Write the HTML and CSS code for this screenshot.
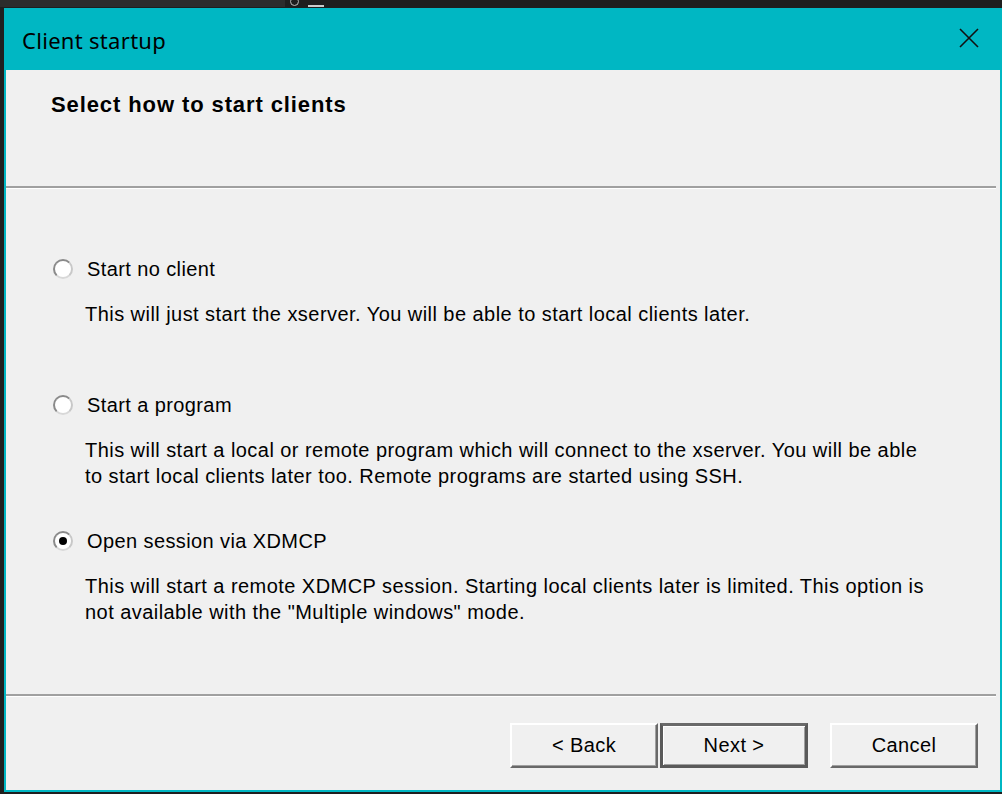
FILE: index.html
```html
<!DOCTYPE html>
<html>
<head>
<meta charset="utf-8">
<link rel="stylesheet" href="styles.css">
</head>
<body>
<div class="topbar"><span class="top-strip"></span><span class="top-ring"></span><span class="top-line"></span></div>
<div class="window">
  <div class="titlebar">
    <span class="title">Client startup</span>
    <svg class="close" width="22" height="22" viewBox="0 0 22 22"><path d="M2 2 L20 20 M20 2 L2 20" stroke="#111" stroke-width="1.6" fill="none"/></svg>
  </div>
  <div class="header">
    <h1 class="heading">Select how to start clients</h1>
  </div>
  <div class="separator"></div>
  <div class="content">
    <div class="option">
      <div class="option-row"><span class="radio"></span><span class="label">Start no client</span></div>
      <p class="desc">This will just start the xserver. You will be able to start local clients later.</p>
    </div>
    <div class="option">
      <div class="option-row"><span class="radio"></span><span class="label">Start a program</span></div>
      <p class="desc">This will start a local or remote program which will connect to the xserver. You will be able<br>to start local clients later too. Remote programs are started using SSH.</p>
    </div>
    <div class="option">
      <div class="option-row"><span class="radio checked"></span><span class="label">Open session via XDMCP</span></div>
      <p class="desc">This will start a remote XDMCP session. Starting local clients later is limited. This option is<br>not available with the "Multiple windows" mode.</p>
    </div>
  </div>
  <div class="separator"></div>
  <div class="footer">
    <button class="btn">&lt; Back</button>
    <button class="btn default">Next &gt;</button>
    <button class="btn cancel">Cancel</button>
  </div>
</div>
</body>
</html>
```
FILE: styles.css
```css
* { box-sizing: border-box; }
html, body { margin: 0; padding: 0; }
body {
  background: #1f1f1f;
  width: 1002px;
  height: 794px;
  overflow: hidden;
  font-family: "Liberation Sans", Arial, sans-serif;
}
.topbar {
  height: 8px;
  position: relative;
  background: #1e1e1e;
}
.top-strip {
  display: block;
  width: 285px;
  height: 7px;
  background: #2c2c2c;
}
.top-ring {
  position: absolute;
  left: 290px;
  top: -3px;
  width: 9px;
  height: 9px;
  border: 1px solid #bbb;
  border-radius: 50%;
}
.top-line {
  position: absolute;
  left: 308px;
  top: 5px;
  width: 16px;
  height: 2px;
  background: #ccc;
}
.window {
  margin-left: 4px;
  width: 998px;
  height: 784px;
  border: 2px solid #00b7c3;
  border-top: none;
  background: #f0f0f0;
  display: flex;
  flex-direction: column;
}
.titlebar {
  height: 62px;
  background: #00b7c3;
  display: flex;
  align-items: center;
  justify-content: space-between;
  padding: 0 22px 0 18px;
  margin: 0 -2px;
}
.title {
  font-family: "Noto Sans", "Open Sans", sans-serif;
  font-size: 22px;
  letter-spacing: 0.3px;
  color: #000;
  padding-top: 2px;
}
.close { margin-top: -2px; }
.header {
  height: 116px;
  padding: 22px 0 0 45px;
}
.heading {
  margin: 0;
  font-size: 22px;
  font-weight: bold;
  letter-spacing: 0.9px;
  color: #000;
}
.separator {
  height: 3px;
  border-top: 2px solid #a0a0a0;
  border-bottom: 1px solid #ffffff;
  margin-right: 4px;
}
.content {
  height: 505px;
  padding: 68px 0 0 47px;
}
.option { height: 136px; }
.option-row {
  display: flex;
  align-items: center;
  height: 24px;
}
.radio {
  width: 20px;
  height: 20px;
  border-radius: 50%;
  background: #fff;
  border: 2px solid #8a8a8a;
  border-bottom-color: #d8d8d8;
  border-right-color: #c8c8c8;
  position: relative;
  margin-right: 14px;
  flex: none;
}
.radio.checked::after {
  content: "";
  position: absolute;
  left: 4px;
  top: 4px;
  width: 8px;
  height: 8px;
  border-radius: 50%;
  background: #000;
}
.label {
  font-size: 20px;
  letter-spacing: 0.4px;
  color: #000;
}
.desc {
  margin: 20px 0 0 32px;
  font-size: 20px;
  letter-spacing: 0.45px;
  line-height: 26px;
  color: #000;
}
.footer {
  flex: 1;
  display: flex;
  align-items: flex-start;
  padding: 26px 0 0 504px;
}
.btn {
  width: 148px;
  height: 45px;
  font-family: "Liberation Sans", Arial, sans-serif;
  font-size: 20px;
  letter-spacing: 0.4px;
  color: #000;
  background: #f0f0f0;
  border: 2px solid;
  border-color: #ffffff #696969 #696969 #ffffff;
  box-shadow: inset -1px -1px 0 #a0a0a0;
  padding: 0;
}
.btn.default {
  margin-left: 2px;
  border: 3px solid #5a5a5a;
  border-top-color: #6a6a6a;
  box-shadow: inset 1px 1px 0 #fff, inset -1px -1px 0 #a0a0a0;
}
.btn.cancel { margin-left: 22px; }
```
